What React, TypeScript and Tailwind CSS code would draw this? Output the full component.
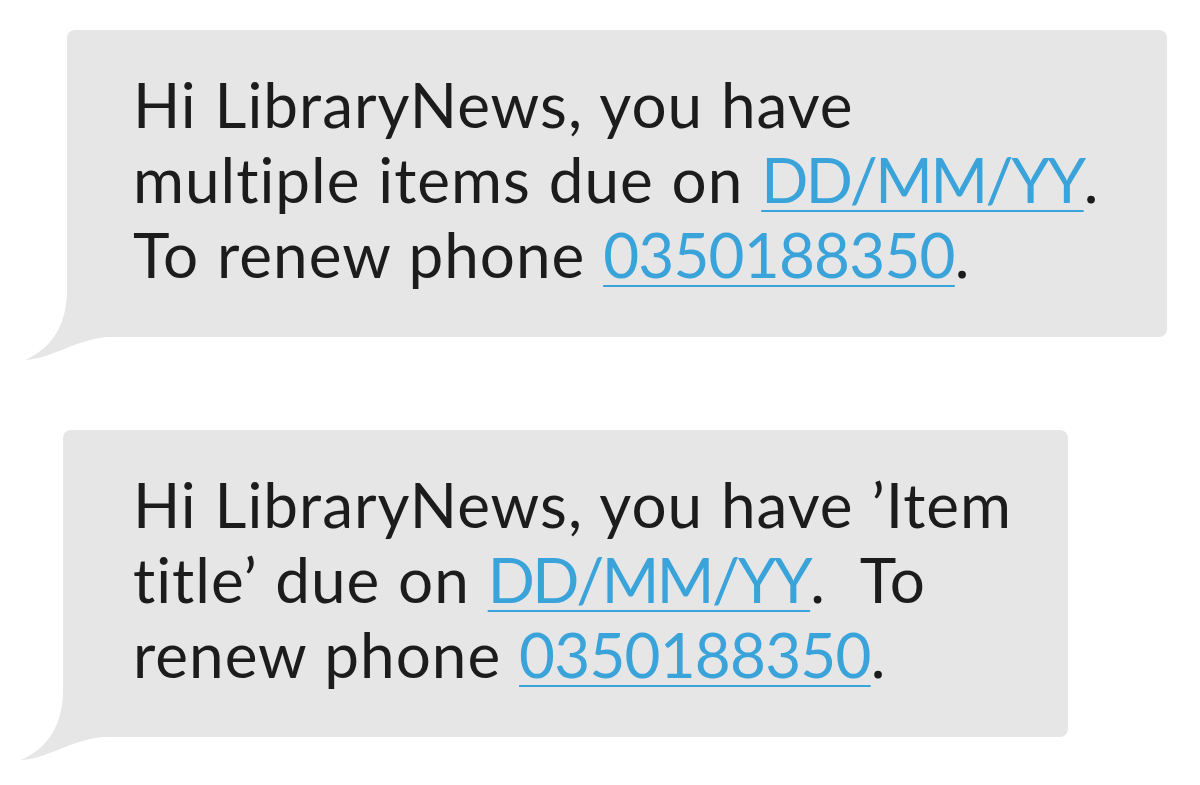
import React from "react";

function Tail() {
  return (
    <svg
      className="absolute left-[-45px] bottom-[-24px]"
      width="120"
      height="131"
      viewBox="0 0 120 131"
    >
      <path
        d="M 45 0 L 45 55 C 46 95, 30 118, 3 130 C 35 128, 55 106, 100 106 L 120 106 L 120 0 Z"
        fill="#e6e6e6"
      />
    </svg>
  );
}

function DateLink() {
  return (
    <span className="text-[#3aa3d9] underline decoration-[2px] underline-offset-[7px] tracking-[-2.5px]">
      DD/MM/YY
    </span>
  );
}

function PhoneLink() {
  return (
    <span className="text-[#3aa3d9] underline decoration-[2px] underline-offset-[7px] tracking-[-0.8px]">
      0350188350
    </span>
  );
}

export default function App() {
  return (
    <div
      className="w-[1200px] h-[785px] bg-white flex flex-col overflow-hidden text-[#1c1c1c]"
      style={{ fontFamily: "Lato, 'Noto Sans', sans-serif" }}
    >
      <div className="relative mt-[30px] ml-[67px] w-[1100px] h-[307px] rounded-[8px] bg-[#e6e6e6]">
        <Tail />
        <p className="relative pl-[66px] pt-[37px] text-[62px] leading-[75px] tracking-[1px] [word-spacing:1px]">
          Hi LibraryNews, you have
          <br />
          multiple items due on <DateLink />.
          <br />
          To renew phone <PhoneLink />.
        </p>
      </div>
      <div className="relative mt-[93px] ml-[63px] w-[1005px] h-[307px] rounded-[8px] bg-[#e6e6e6]">
        <Tail />
        <p className="relative pl-[70px] pt-[37px] text-[62px] leading-[75px] tracking-[1px] [word-spacing:1px]">
          Hi LibraryNews, you have ’Item
          <br />
          title’ due on <DateLink />.&nbsp; To
          <br />
          renew phone <PhoneLink />.
        </p>
      </div>
    </div>
  );
}
